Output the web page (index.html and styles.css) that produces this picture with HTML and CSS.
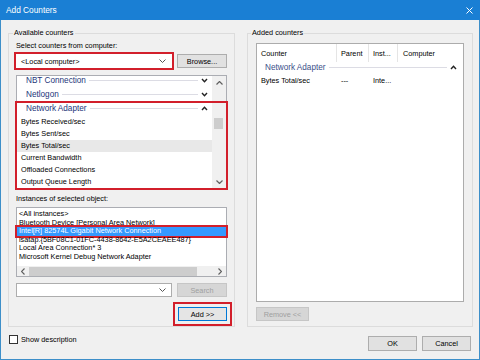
FILE: index.html
```html
<!DOCTYPE html>
<html>
<head>
 <meta charset="utf-8"/>
 <title>Add Counters</title>
 <link rel="stylesheet" href="styles.css">
</head>
<body>
<div class="window">

<!-- _______________________________________________________________ -->
 <div class="titlebar">
  <span class="title">Add Counters</span>
  <svg class="close" width="7" height="7" viewBox="0 0 7 7"><path d="M0.5 0.5 L6.5 6.5 M6.5 0.5 L0.5 6.5" stroke="#fff" stroke-width="1"/></svg>
 </div>

<!-- _______________________________________________________________ -->
 <div class="client">
  <div class="groups">

   <fieldset class="group avail">
    <legend>Available counters</legend>
    <div class="label">Select counters from computer:</div>
    <div class="line">
     <div class="combo marked">
      <span>&lt;Local computer&gt;</span>
      <svg width="7" height="4" viewBox="0 0 7 4"><path d="M0.5 0.5 L3.5 3.5 L6.5 0.5" fill="none" stroke="#555" stroke-width="1"/></svg>
     </div>
     <div class="button browse">Browse...</div>
    </div>

    <div class="list counters">
     <div class="rows">
      <div class="grouphead first"><span>NBT Connection</span><i class="rule"></i>
       <svg width="7" height="5" viewBox="0 0 7 5"><path d="M1 1 L3.5 3.8 L6 1" fill="none" stroke="#222" stroke-width="1.4"/></svg></div>
      <div class="grouphead"><span>Netlogon</span><i class="rule"></i>
       <svg width="7" height="5" viewBox="0 0 7 5"><path d="M1 1 L3.5 3.8 L6 1" fill="none" stroke="#222" stroke-width="1.4"/></svg></div>
      <div class="grouphead open"><span>Network Adapter</span><i class="rule"></i>
       <svg width="7" height="5" viewBox="0 0 7 5"><path d="M1 4 L3.5 1.2 L6 4" fill="none" stroke="#222" stroke-width="1.4"/></svg></div>
      <div class="item">Bytes Received/sec</div>
      <div class="item">Bytes Sent/sec</div>
      <div class="item hover">Bytes Total/sec</div>
      <div class="item">Current Bandwidth</div>
      <div class="item">Offloaded Connections</div>
      <div class="item">Output Queue Length</div>
     </div>
     <div class="vscroll">
      <div class="arrow"><svg width="7" height="4" viewBox="0 0 7 4"><path d="M0.5 3.5 L3.5 0.5 L6.5 3.5" fill="none" stroke="#606060" stroke-width="1.2"/></svg></div>
      <div class="track"><div class="thumb"></div></div>
      <div class="arrow"><svg width="7" height="4" viewBox="0 0 7 4"><path d="M0.5 0.5 L3.5 3.5 L6.5 0.5" fill="none" stroke="#606060" stroke-width="1.2"/></svg></div>
     </div>
     <div class="mark"></div>
    </div>

    <div class="label below">Instances of selected object:</div>
    <div class="list instances">
     <div class="inst">&lt;All instances&gt;</div>
     <div class="inst">Bluetooth Device [Personal Area Network]</div>
     <div class="inst selected">Intel[R] 82574L Gigabit Network Connection</div>
     <div class="inst">isatap.{5BF08C1-01FC-4438-8642-E5A2CEAEE487}</div>
     <div class="inst">Local Area Connection* 3</div>
     <div class="inst">Microsoft Kernel Debug Network Adapter</div>
     <div class="hscroll">
      <div class="harrow"><svg width="4" height="7" viewBox="0 0 4 7"><path d="M3.5 0.5 L0.5 3.5 L3.5 6.5" fill="none" stroke="#606060" stroke-width="1.2"/></svg></div>
      <div class="hthumb"></div>
      <div class="hgap"></div>
      <div class="harrow"><svg width="4" height="7" viewBox="0 0 4 7"><path d="M0.5 0.5 L3.5 3.5 L0.5 6.5" fill="none" stroke="#606060" stroke-width="1.2"/></svg></div>
     </div>
    </div>

    <div class="line search">
     <div class="combo">
      <span></span>
      <svg width="7" height="4" viewBox="0 0 7 4"><path d="M0.5 0.5 L3.5 3.5 L6.5 0.5" fill="none" stroke="#555" stroke-width="1"/></svg>
     </div>
     <div class="button browse disabled">Search</div>
    </div>
    <div class="line addline">
     <div class="button add">Add &gt;&gt;</div>
    </div>
   </fieldset>

   <fieldset class="group added">
    <legend>Added counters</legend>
    <div class="table">
     <div class="thead">
      <span>Counter</span><span>Parent</span><span>Inst...</span><span>Computer</span>
     </div>
     <div class="grouphead tgroup"><span>Network Adapter</span><i class="rule"></i>
      <svg width="7" height="5" viewBox="0 0 7 5"><path d="M1 4 L3.5 1.2 L6 4" fill="none" stroke="#222" stroke-width="1.4"/></svg></div>
     <div class="trow">
      <span>Bytes Total/sec</span><span>---</span><span>Inte...</span><span></span>
     </div>
    </div>
    <div class="button remove disabled">Remove &lt;&lt;</div>
   </fieldset>

  </div>

<!-- _______________________________________________________________ -->
  <div class="bottom">
   <div class="check"></div>
   <span class="checklabel">Show description</span>
   <div class="spacer"></div>
   <div class="button dlg">OK</div>
   <div class="button dlg">Cancel</div>
  </div>
 </div>
</div>
</body>
</html>
```

FILE: styles.css
```css
* { box-sizing: border-box; }
body {
 margin: 0;
 width: 480px;
 height: 360px;
 overflow: hidden;
 background-color: #f0f0f0;
 font-family: "Liberation Sans", Arial, sans-serif;
 font-size: 7.3px;
 color: #000; }
.window {
 height: 360px;
 display: flex;
 flex-direction: column;
 border: 1px solid #3d8fc9;
 border-top: 0; }

.titlebar {
 height: 20px;
 margin: 0 -1px;
 background-color: #1a7fd4;
 display: flex;
 align-items: center;
 padding-left: 6px;
 padding-right: 7px; }
.title {
 color: #fff;
 font-size: 8.3px;
 flex: 1; }

.client { padding: 8px 7px 0 7px; }
.groups {
 display: grid;
 grid-template-columns: 227px 226px;
 column-gap: 12px; }
.group {
 margin: 0;
 min-width: 0;
 border: 1px solid #dcdcdc;
 padding: 0 7px 5px 7px; }
.group.added { padding: 0 8px 5px 8px; }
legend {
 padding: 0 1px;
 line-height: 10px; }
.avail legend { margin-left: -3px; }
.added legend { margin-left: -5px; }

.label {
 line-height: 10px;
 margin-top: 3px; }
.label.below { margin-top: 4px; }
.line {
 display: flex;
 gap: 5px;
 margin-top: 3px; }
.line.search { margin-top: 6px; }
.line.addline {
 margin-top: 10px;
 justify-content: flex-end; }

.combo {
 flex: 1;
 height: 14px;
 background-color: #fff;
 border: 1px solid #adadad;
 display: flex;
 align-items: center;
 padding: 0 5px 0 4px; }
.combo span { flex: 1; }
.combo.marked {
 border-color: #fff;
 outline: 2px solid #d21f2b; }

.button {
 height: 14px;
 border: 1px solid #adadad;
 background-color: #e1e1e1;
 display: flex;
 align-items: center;
 justify-content: center; }
.browse { width: 50px; }
.disabled {
 background-color: #d6d6d6;
 border-color: #c6c6c6;
 color: #a0a0a0; }
.add {
 width: 49px;
 border-color: #0078d7;
 background-color: #e5e5e5;
 outline: 2px solid #d21f2b;
 outline-offset: 3px; }
.remove {
 width: 53px;
 margin-top: 5px; }

.list {
 background-color: #fff;
 border: 1px solid #abadb3; }
.counters {
 position: relative;
 height: 115px;
 margin-top: 7px;
 display: flex; }
.rows {
 flex: 1;
 overflow: hidden; }
.grouphead {
 height: 14px;
 display: flex;
 align-items: center;
 padding: 0 4px 0 9px;
 font-size: 8.2px;
 color: #24367a; }
.grouphead.first { margin-top: -3px; }
.grouphead.open { height: 15px; }
.rule {
 flex: 1;
 height: 1px;
 background-color: #dcdce4;
 margin: 0 3px 0 3px; }
.item {
 height: 12px;
 line-height: 12px;
 padding-left: 4px; }
.item.hover { background-color: #e8e8e8; }
.vscroll {
 width: 14px;
 background-color: #f0f0f0;
 display: flex;
 flex-direction: column; }
.arrow {
 height: 14px;
 display: flex;
 align-items: center;
 justify-content: center; }
.track { flex: 1; }
.thumb {
 margin: 28px 3px 0 2px;
 height: 11px;
 background-color: #cdcdcd; }
.mark {
 position: absolute;
 left: -2px;
 right: -2px;
 top: 25px;
 bottom: -1px;
 border: 2px solid #d21f2b; }

.instances {
 height: 70px;
 margin-top: 3px;
 padding-top: 2px;
 display: flex;
 flex-direction: column; }
.inst {
 height: 8.6px;
 line-height: 8.6px;
 padding-left: 2px;
 white-space: nowrap; }
.inst.selected {
 background-color: #3399ff;
 color: #fff;
 outline: 2px solid #d21f2b; }
.hscroll {
 margin-top: auto;
 height: 10px;
 background-color: #f0f0f0;
 display: flex;
 align-items: center; }
.harrow {
 width: 12px;
 display: flex;
 justify-content: center; }
.hthumb {
 width: 168px;
 height: 9px;
 background-color: #cdcdcd; }
.hgap { flex: 1; }

.table {
 height: 259px;
 margin-top: 5px;
 background-color: #fff;
 border: 1px solid #acacac; }
.thead, .trow {
 display: grid;
 grid-template-columns: 80px 32px 29px 1fr; }
.thead { height: 18px; }
.thead span {
 display: flex;
 align-items: center;
 padding-left: 4px;
 border-right: 1px solid #e5e5e5; }
.thead span:last-child { border-right: 0; padding-left: 5px; }
.tgroup {
 height: 11px;
 padding: 0 6px 0 8px;
 color: #3b4f89; }
.trow {
 margin-top: 2px;
 height: 12px;
 line-height: 12px; }
.trow span { padding-left: 4px; }

.bottom {
 display: flex;
 align-items: flex-start;
 margin-top: 9px;
 padding-right: 1px; }
.check {
 width: 9px;
 height: 9px;
 margin-top: -1px;
 margin-left: 1px;
 background-color: #fff;
 border: 1px solid #333; }
.checklabel {
 margin-left: 3px;
 margin-top: -1px;
 line-height: 9px; }
.spacer { flex: 1; }
.dlg {
 width: 49px;
 height: 15px;
 margin-left: 5px; }
```
